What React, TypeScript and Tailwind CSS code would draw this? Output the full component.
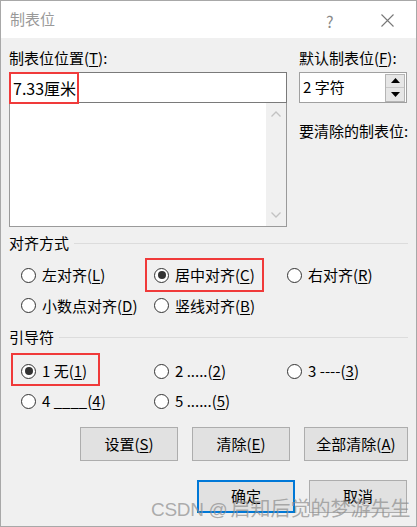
import React from "react";

const F = { fontFamily: '"Noto Sans CJK SC", "Noto Sans", sans-serif' };

function U({ children }: { children: React.ReactNode }) {
  return <span className="underline underline-offset-2 decoration-1">{children}</span>;
}

function Radio({ checked, label }: { checked?: boolean; label: React.ReactNode }) {
  return (
    <div className="flex items-center h-full">
      <div className="w-[15px] h-[15px] rounded-full border border-[#333] bg-white flex items-center justify-center shrink-0">
        {checked && <div className="w-[8px] h-[8px] rounded-full bg-[#333]" />}
      </div>
      <span className="ml-[6px] text-[15px] leading-[20px] text-black whitespace-nowrap">{label}</span>
    </div>
  );
}

function Btn({ w, children, primary }: { w: string; children: React.ReactNode; primary?: boolean }) {
  return (
    <div
      className={`${w} h-full flex items-center justify-center bg-[#e1e1e1] text-[15px] text-black ${
        primary ? "border-2 border-[#0078d7]" : "border border-[#adadad]"
      }`}
    >
      {children}
    </div>
  );
}

function GroupHeader({ title }: { title: string }) {
  return (
    <div className="flex items-center h-[20px]">
      <span className="text-[15px] leading-[20px] text-black whitespace-nowrap">{title}</span>
      <div className="flex-1 h-px bg-[#dcdcdc] ml-[5px]" />
    </div>
  );
}

export default function App() {
  return (
    <div style={F} className="w-[417px] h-[527px] border border-[#a8a8a8] bg-[#f0f0f0] flex flex-col relative overflow-hidden">
      {/* title bar */}
      <div className="h-[37px] bg-white flex items-center relative shrink-0">
        <span className="ml-[9px] text-[15px] text-[#999]">制表位</span>
        <span className="absolute left-[325px] top-[8px] text-[16px] text-[#888]">?</span>
        <svg className="absolute left-[380px] top-[13px]" width="13" height="13" viewBox="0 0 13 13">
          <path d="M0.5 0.5 L12.5 12.5 M12.5 0.5 L0.5 12.5" stroke="#777" strokeWidth="1.1" />
        </svg>
      </div>

      <div className="flex-1 pl-[8px] pr-[8px] pt-[10px] flex flex-col">
        {/* top section */}
        <div className="flex">
          <div className="w-[278px] flex flex-col">
            <div className="h-[20px] text-[15px] leading-[20px] text-black">
              制表位位置(<U>T</U>):
            </div>
            <div className="mt-[4px] h-[31px] bg-white border border-[#7a7a7a] relative flex items-center">
              <span className="ml-[3px] text-[16px] text-black">7.33厘米</span>
              <div className="absolute left-[-1px] top-[-1px] w-[70px] h-[32px] border-2 border-[#f03a3a]" />
            </div>
            <div className="h-[124px] bg-white border border-[#9a9a9a] border-t-0 flex">
              <div className="flex-1" />
              <div className="w-[20px] bg-[#f0f0f0] flex flex-col items-center justify-between py-[8px]">
                <svg width="10" height="6" viewBox="0 0 10 6">
                  <path d="M0.5 5.5 L5 1 L9.5 5.5" stroke="#c2c2c2" strokeWidth="1.3" fill="none" />
                </svg>
                <svg width="10" height="6" viewBox="0 0 10 6">
                  <path d="M0.5 0.5 L5 5 L9.5 0.5" stroke="#c2c2c2" strokeWidth="1.3" fill="none" />
                </svg>
              </div>
            </div>
          </div>
          <div className="ml-[12px] w-[108px] flex flex-col">
            <div className="h-[20px] text-[15px] leading-[20px] text-black whitespace-nowrap">
              默认制表位(<U>F</U>):
            </div>
            <div className="mt-[4px] h-[31px] bg-white border border-[#a0a0a0] flex items-center">
              <span className="ml-[3px] text-[15px] text-black flex-1">2 字符</span>
              <div className="w-[20px] h-[28px] mr-[1px] flex flex-col border border-[#b5b5b5]">
                <div className="flex-1 bg-[#e6e6e6] flex items-center justify-center border-b border-[#c8c8c8]">
                  <svg width="9" height="5" viewBox="0 0 9 5"><path d="M0 5 L4.5 0 L9 5 Z" fill="#000" /></svg>
                </div>
                <div className="flex-1 bg-[#e6e6e6] flex items-center justify-center">
                  <svg width="9" height="5" viewBox="0 0 9 5"><path d="M0 0 L4.5 5 L9 0 Z" fill="#000" /></svg>
                </div>
              </div>
            </div>
            <div className="mt-[18px] h-[20px] text-[15px] leading-[20px] text-black whitespace-nowrap">
              要清除的制表位:
            </div>
          </div>
        </div>

        {/* alignment */}
        <div className="mt-[6px]">
          <GroupHeader title="对齐方式" />
        </div>
        <div className="mt-[7px] pl-[12px] grid grid-cols-[133px_133px_133px] grid-rows-[30px_31px]">
          <Radio label={<>左对齐(<U>L</U>)</>} />
          <div className="relative h-full">
            <Radio checked label={<>居中对齐(<U>C</U>)</>} />
            <div className="absolute left-[-9px] top-[-2px] w-[119px] h-[34px] border-2 border-[#f03a3a]" />
          </div>
          <Radio label={<>右对齐(<U>R</U>)</>} />
          <Radio label={<>小数点对齐(<U>D</U>)</>} />
          <Radio label={<>竖线对齐(<U>B</U>)</>} />
        </div>

        {/* leader */}
        <div className="mt-[6px]">
          <GroupHeader title="引导符" />
        </div>
        <div className="mt-[9px] pl-[12px] grid grid-cols-[133px_133px_133px] grid-rows-[30px_30px]">
          <div className="relative h-full">
            <Radio checked label={<>1 无(<U>1</U>)</>} />
            <div className="absolute left-[-10px] top-[-3px] w-[89px] h-[33px] border-2 border-[#f03a3a]" />
          </div>
          <Radio label={<>2 .....(<U>2</U>)</>} />
          <Radio label={<>3 ----(<U>3</U>)</>} />
          <Radio label={<>4 ____(<U>4</U>)</>} />
          <Radio label={<>5 ......(<U>5</U>)</>} />
        </div>

        {/* buttons */}
        <div className="mt-[11px] h-[34px] flex justify-end gap-[14px]">
          <Btn w="w-[98px]">设置(<U>S</U>)</Btn>
          <Btn w="w-[98px]">清除(<U>E</U>)</Btn>
          <Btn w="w-[104px]">全部清除(<U>A</U>)</Btn>
        </div>
        <div className="mt-[19px] h-[33px] flex justify-end gap-[14px] pr-[1px]">
          <Btn w="w-[98px]" primary>确定</Btn>
          <Btn w="w-[98px]">取消</Btn>
        </div>
      </div>

      {/* watermark */}
      <div className="absolute left-[150px] top-[494px] flex items-baseline leading-[26px] text-[rgba(140,140,140,0.7)] whitespace-nowrap pointer-events-none">
        <span className="text-[19px] tracking-[-0.3px]" style={{ fontFamily: '"Liberation Sans", sans-serif' }}>
          CSDN @
        </span>
        <span className="text-[20px] ml-[3px]">启知后觉的梦游先生</span>
      </div>
    </div>
  );
}
